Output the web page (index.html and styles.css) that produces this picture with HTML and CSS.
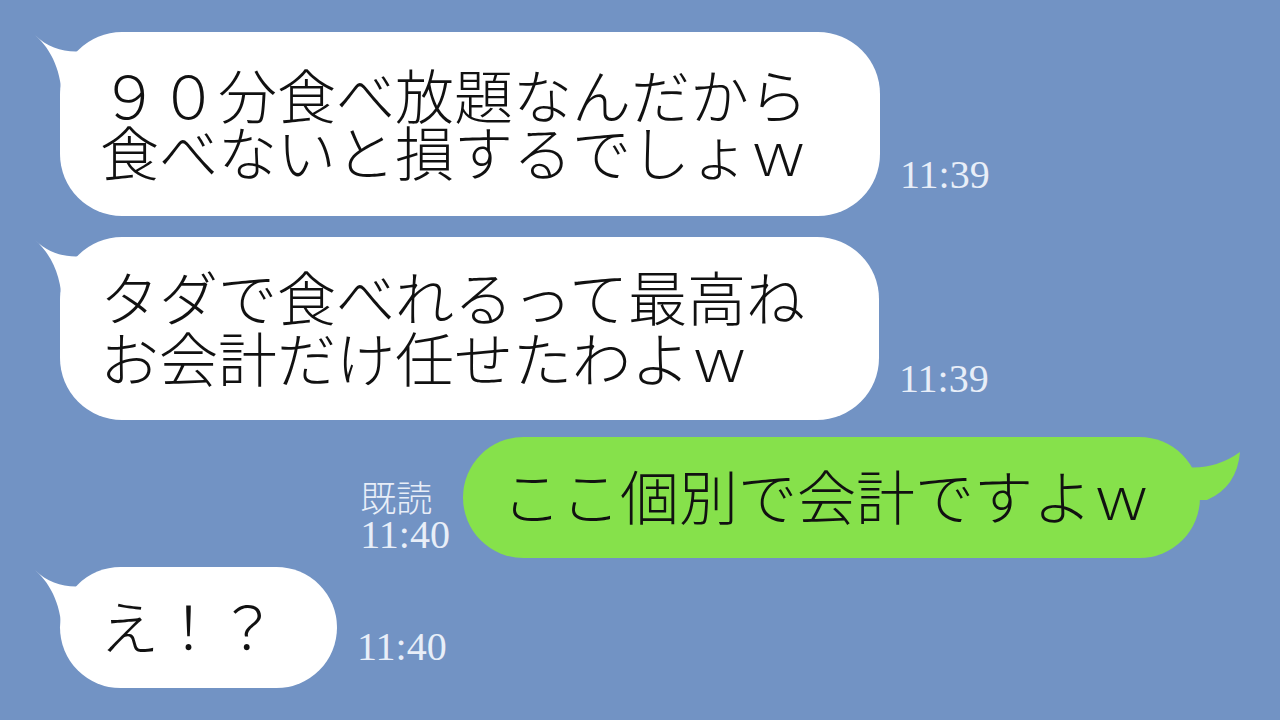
FILE: index.html
```html
<!DOCTYPE html>
<html>
    <head>
        <meta charset="utf-8">
        <link rel="stylesheet" href="styles.css">
    </head>
    <body>
        <div class="chat">
            <div class="row">
                <div class="bubble left first">
                    <svg class="tail" viewBox="0 0 60 70"><path d="M5 3 C20 18 40 22 60 18 L60 70 L32 70 C32 40 22 18 5 3 Z"/></svg>
                    ９０分食べ放題なんだから<br>食べないと損するでしょｗ
                </div>
                <div class="meta">11:39</div>
            </div>
            <div class="row">
                <div class="bubble left second">
                    <svg class="tail" viewBox="0 0 60 70"><path d="M5 3 C20 18 40 22 60 18 L60 70 L32 70 C32 40 22 18 5 3 Z"/></svg>
                    タダで食べれるって最高ね<br>お会計だけ任せたわよｗ
                </div>
                <div class="meta">11:39</div>
            </div>
            <div class="row mine">
                <div class="meta read">
                    <div class="read-label">既読</div>
                    <div>11:40</div>
                </div>
                <div class="bubble right">
                    <svg class="tail" viewBox="0 0 60 80"><path d="M0 30 Q30 33 55 15 Q52 50 22 63 L0 63 Z"/></svg>
                    ここ個別で会計ですよｗ
                </div>
            </div>
            <div class="row">
                <div class="bubble left short">
                    <svg class="tail" viewBox="0 0 60 70"><path d="M5 3 C20 18 40 22 60 18 L60 70 L32 70 C32 40 22 18 5 3 Z"/></svg>
                    え！？
                </div>
                <div class="meta">11:40</div>
            </div>
        </div>
    </body>
</html>
```

FILE: styles.css
```css
body {
    margin: 0;
    background-color: #7293c4;
    font-family: "Noto Sans CJK JP", sans-serif;
}

.chat {
    display: flex;
    flex-direction: column;
    padding: 32px 80px 0 60px;
}

.row {
    display: flex;
    align-items: flex-end;
    gap: 20px;
    margin-bottom: 17px;
}

.row:first-child {
    margin-bottom: 21px;
}

.row.mine {
    justify-content: flex-end;
    gap: 13px;
    margin-bottom: 9px;
}

.bubble {
    position: relative;
    font-family: "Noto Sans CJK JP Light", "Noto Sans CJK JP", sans-serif;
    font-size: 59px;
    font-weight: 300;
    line-height: 60px;
    color: #111;
    border-radius: 62px;
    white-space: nowrap;
}

.bubble.left {
    background-color: #ffffff;
    fill: #ffffff;
}

.bubble.first {
    line-height: 57px;
    padding: 33px 72px 37px 40px;
}

.bubble.second {
    line-height: 61px;
    padding: 28px 74px 33px 40px;
}

.bubble.short {
    padding: 28px 60px 33px 40px;
}

.bubble.right {
    background-color: #86e14b;
    fill: #86e14b;
    padding: 28px 49px 33px 39px;
}

.tail {
    position: absolute;
    width: 60px;
    height: 70px;
    left: -30px;
    top: 0;
}

.bubble.right .tail {
    left: auto;
    right: -45px;
    height: 80px;
}

.meta {
    color: #e8eef8;
    font-family: "Liberation Serif", "Noto Sans CJK JP", serif;
    font-size: 40px;
    line-height: 40px;
    margin-bottom: 21px;
}

.meta.read {
    margin-bottom: 3px;
}

.read-label {
    font-family: "Noto Sans CJK JP", sans-serif;
    font-size: 36px;
    font-weight: 300;
    line-height: 38px;
}
```
